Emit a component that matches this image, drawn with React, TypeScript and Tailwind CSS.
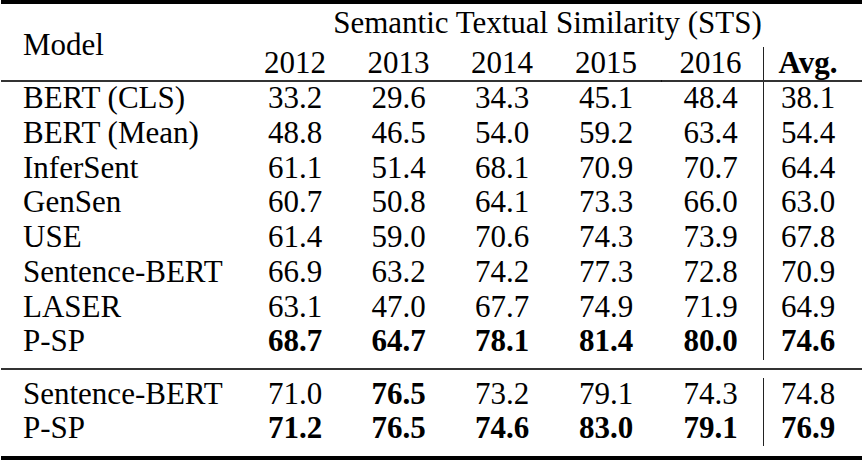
import React from 'react';

type Row = { model: string; vals: string[]; bold?: boolean[] };

const group1: Row[] = [
  { model: 'BERT (CLS)', vals: ['33.2', '29.6', '34.3', '45.1', '48.4', '38.1'] },
  { model: 'BERT (Mean)', vals: ['48.8', '46.5', '54.0', '59.2', '63.4', '54.4'] },
  { model: 'InferSent', vals: ['61.1', '51.4', '68.1', '70.9', '70.7', '64.4'] },
  { model: 'GenSen', vals: ['60.7', '50.8', '64.1', '73.3', '66.0', '63.0'] },
  { model: 'USE', vals: ['61.4', '59.0', '70.6', '74.3', '73.9', '67.8'] },
  { model: 'Sentence-BERT', vals: ['66.9', '63.2', '74.2', '77.3', '72.8', '70.9'] },
  { model: 'LASER', vals: ['63.1', '47.0', '67.7', '74.9', '71.9', '64.9'] },
  {
    model: 'P-SP',
    vals: ['68.7', '64.7', '78.1', '81.4', '80.0', '74.6'],
    bold: [true, true, true, true, true, true],
  },
];

const group2: Row[] = [
  {
    model: 'Sentence-BERT',
    vals: ['71.0', '76.5', '73.2', '79.1', '74.3', '74.8'],
    bold: [false, true, false, false, false, false],
  },
  {
    model: 'P-SP',
    vals: ['71.2', '76.5', '74.6', '83.0', '79.1', '76.9'],
    bold: [true, true, true, true, true, true],
  },
];

// widths of the five year columns, then the Avg. column
const yearCols = ['w-[104px]', 'w-[103px]', 'w-[104px]', 'w-[104px]', 'w-[105px]'];

const BodyRow: React.FC<{ row: Row; h: string }> = ({ row, h }) => (
  <div className={`flex ${h}`}>
    <div className="w-[242px] pl-[22px] whitespace-nowrap">{row.model}</div>
    {row.vals.slice(0, 5).map((v, i) => (
      <div key={i} className={`${yearCols[i]} text-center ${row.bold?.[i] ? 'font-bold' : ''}`}>
        {v}
      </div>
    ))}
    <div className={`w-[89px] border-l border-[#222] text-center ${row.bold?.[5] ? 'font-bold' : ''}`}>
      {row.vals[5]}
    </div>
  </div>
);

export default function App() {
  return (
    <div
      className="w-[866px] h-[460px] bg-white text-black text-[31px] overflow-hidden"
      style={{ fontFamily: '"Liberation Serif", "Times New Roman", serif' }}
    >
      <div className="ml-[1px] w-[861px]">
        <div className="h-[4px] bg-black" />

        {/* header */}
        <div className="flex h-[76px]">
          <div className="w-[242px] pl-[22px] pt-[23px] leading-[35px]">Model</div>
          <div className="flex flex-col">
            <div className="w-[609px] h-[43px] pt-[1px] leading-[35px] text-center whitespace-nowrap">
              Semantic Textual Similarity (STS)
            </div>
            <div className="flex h-[33px] leading-[31px]">
              <div className="w-[104px] text-center">2012</div>
              <div className="w-[103px] text-center">2013</div>
              <div className="w-[104px] text-center">2014</div>
              <div className="w-[104px] text-center">2015</div>
              <div className="w-[105px] text-center">2016</div>
              <div className="w-[89px] border-l border-[#222] text-center font-bold">Avg.</div>
            </div>
          </div>
        </div>
        <div className="flex h-[2px]">
          <div className="w-[660px] bg-[#333]" />
          <div className="w-[1px] bg-[#111]" />
          <div className="flex-1 bg-[#333]" />
        </div>

        <div className="leading-[32px]">
          {group1.map((r) => (
            <BodyRow key={r.model} row={r} h="h-[34.75px]" />
          ))}
        </div>

        <div className="pt-[8px] pb-[8px]">
          <div className="h-[2px] bg-[#333]" />
        </div>

        <div className="leading-[32px]">
          {group2.map((r, i) => (
            <BodyRow key={r.model + i} row={r} h="h-[34px]" />
          ))}
        </div>

        <div className="h-[10px]" />
        <div className="h-[4px] bg-black" />
      </div>
    </div>
  );
}
